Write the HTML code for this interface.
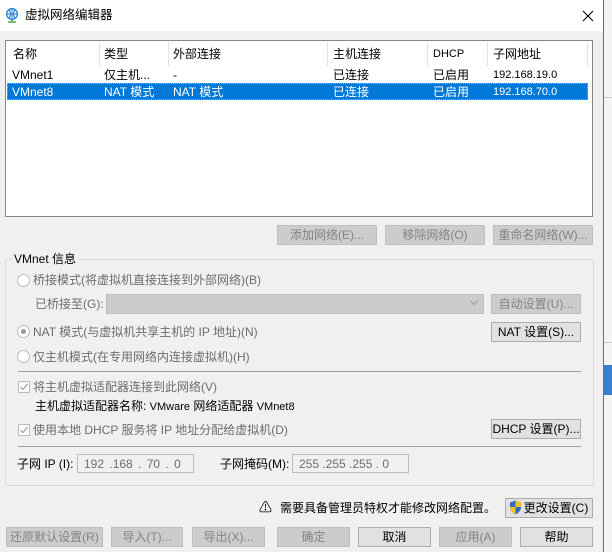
<!DOCTYPE html>
<html><head><meta charset="utf-8"><style>
*{box-sizing:border-box;margin:0;padding:0}
body{width:612px;height:552px;overflow:hidden;background:#f0f0f0;font-family:"Liberation Sans","Noto Sans CJK SC",sans-serif;font-size:12px;color:#000;position:relative}
.a{position:absolute;white-space:nowrap}
.btn{position:absolute;border:1px solid #adadad;background:#e1e1e1;text-align:center;line-height:18px;font-size:12px}
.dis{background:#cccccc;border-color:#bfbfbf;color:#838383}
.g{color:#6d6d6d}
.t{line-height:14px}
</style></head><body>
<div class="a" style="left:0;top:0;width:604px;height:31px;background:#fff"></div>
<div class="a" style="left:603px;top:0;width:1px;height:552px;background:#2b78d0"></div>
<div class="a" style="left:604px;top:0;width:8px;height:552px;background:#f4f4f4"></div>
<div class="a" style="left:604px;top:97px;width:8px;height:1px;background:#ccc"></div>
<div class="a" style="left:604px;top:342px;width:8px;height:1px;background:#ccc"></div>
<div class="a" style="left:604px;top:365px;width:8px;height:30px;background:#3a7fd0"></div>
<svg class="a" style="left:5px;top:8px" width="14" height="16" viewBox="0 0 14 16"><circle cx="7" cy="6" r="5.3" fill="none" stroke="#1e7fd4" stroke-width="1.3"/><path d="M1.7 6h10.6M7 0.7v10.6M4 2c2 2 2 6 0 8M10 2c-2 2-2 6 0 8" stroke="#1e7fd4" fill="none"/><path d="M3 14h8M7 11.5v2.5" stroke="#3a9a3a" stroke-width="1.3"/></svg>
<div class="a t" style="left:25px;top:8px;font-size:12.5px">虚拟网络编辑器</div>
<svg class="a" style="left:582px;top:10px" width="12" height="12"><path d="M1 1L11 11M11 1L1 11" stroke="#000" stroke-width="1.1"/></svg>

<div class="a" style="left:5px;top:40px;width:588px;height:177px;background:#fff;border:1px solid #828790"></div>
<div class="a" style="left:6px;top:41px;width:586px;height:26px;background:#fff"></div>
<div class="a" style="left:99px;top:42px;width:1px;height:24px;background:#e5e5e5"></div>
<div class="a" style="left:168px;top:42px;width:1px;height:24px;background:#e5e5e5"></div>
<div class="a" style="left:327px;top:42px;width:1px;height:24px;background:#e5e5e5"></div>
<div class="a" style="left:427px;top:42px;width:1px;height:24px;background:#e5e5e5"></div>
<div class="a" style="left:487px;top:42px;width:1px;height:24px;background:#e5e5e5"></div>
<div class="a" style="left:587px;top:42px;width:1px;height:24px;background:#e5e5e5"></div>
<div class="a t" style="left:13px;top:47px">名称</div>
<div class="a t" style="left:104px;top:47px">类型</div>
<div class="a t" style="left:173px;top:47px">外部连接</div>
<div class="a t" style="left:333px;top:47px">主机连接</div>
<div class="a t" style="left:433px;top:47px;font-size:11px">DHCP</div>
<div class="a t" style="left:493px;top:47px">子网地址</div>
<div class="a t" style="left:12px;top:68px">VMnet1</div>
<div class="a t" style="left:104px;top:68px">仅主机...</div>
<div class="a t" style="left:173px;top:68px">-</div>
<div class="a t" style="left:333px;top:68px">已连接</div>
<div class="a t" style="left:433px;top:68px">已启用</div>
<div class="a t" style="left:493px;top:68px;font-size:11px">192.168.19.0</div>
<div class="a" style="left:7px;top:83px;width:581px;height:17px;background:#0078d7;border:1px dotted #f0a030"></div>
<div class="a t" style="left:12px;top:85px;color:#fff">VMnet8</div>
<div class="a t" style="left:104px;top:85px;color:#fff">NAT 模式</div>
<div class="a t" style="left:173px;top:85px;color:#fff">NAT 模式</div>
<div class="a t" style="left:333px;top:85px;color:#fff">已连接</div>
<div class="a t" style="left:433px;top:85px;color:#fff">已启用</div>
<div class="a t" style="left:493px;top:85px;color:#fff;font-size:11px">192.168.70.0</div>

<div class="btn dis" style="left:277px;top:225px;width:100px;height:20px">添加网络(E)...</div>
<div class="btn dis" style="left:385px;top:225px;width:100px;height:20px">移除网络(O)</div>
<div class="btn dis" style="left:493px;top:225px;width:100px;height:20px">重命名网络(W)...</div>

<div class="a" style="left:5px;top:259px;width:589px;height:227px;border:1px solid #dcdcdc"></div>
<div class="a t" style="left:12px;top:252px;background:#f0f0f0;padding:0 2px">VMnet 信息</div>
<div class="a" style="left:17px;top:274px;width:13px;height:13px;border-radius:50%;border:1px solid #bcbcbc;background:#fff"></div>
<div class="a t g" style="left:33px;top:273px">桥接模式(将虚拟机直接连接到外部网络)(B)</div>
<div class="a t g" style="left:35px;top:297px">已桥接至(G):</div>
<div class="a" style="left:106px;top:294px;width:378px;height:20px;background:#cccccc;border:1px solid #bfbfbf"></div>
<svg class="a" style="left:470px;top:300px" width="8" height="6"><path d="M0.5 1L4 4.5 7.5 1" fill="none" stroke="#999"/></svg>
<div class="btn dis" style="left:491px;top:294px;width:90px;height:20px">自动设置(U)...</div>
<div class="a" style="left:17px;top:325px;width:13px;height:13px;border-radius:50%;border:1px solid #bcbcbc;background:#fff"></div>
<div class="a" style="left:21px;top:329px;width:5px;height:5px;border-radius:50%;background:#9a9a9a"></div>
<div class="a t g" style="left:33px;top:325px">NAT 模式(与虚拟机共享主机的 IP 地址)(N)</div>
<div class="btn" style="left:491px;top:322px;width:90px;height:20px">NAT 设置(S)...</div>
<div class="a" style="left:17px;top:350px;width:13px;height:13px;border-radius:50%;border:1px solid #bcbcbc;background:#fff"></div>
<div class="a t g" style="left:33px;top:350px">仅主机模式(在专用网络内连接虚拟机)(H)</div>
<div class="a" style="left:18px;top:371px;width:563px;height:1px;background:#a0a0a0"></div>
<div class="a" style="left:18px;top:381px;width:12px;height:12px;border:1px solid #bcbcbc;background:#fff"></div>
<svg class="a" style="left:19px;top:382px" width="10" height="10"><path d="M1.5 5L4 7.5 8.5 2" fill="none" stroke="#9a9a9a" stroke-width="1.2"/></svg>
<div class="a t g" style="left:33px;top:380px">将主机虚拟适配器连接到此网络(V)</div>
<div class="a t" style="left:35px;top:399px">主机虚拟适配器名称: <span style="font-size:11px">VMware</span> 网络适配器 <span style="font-size:11px">VMnet8</span></div>
<div class="a" style="left:18px;top:424px;width:12px;height:12px;border:1px solid #bcbcbc;background:#fff"></div>
<svg class="a" style="left:19px;top:425px" width="10" height="10"><path d="M1.5 5L4 7.5 8.5 2" fill="none" stroke="#9a9a9a" stroke-width="1.2"/></svg>
<div class="a t g" style="left:33px;top:423px">使用本地 DHCP 服务将 IP 地址分配给虚拟机(D)</div>
<div class="btn" style="left:491px;top:419px;width:90px;height:20px">DHCP 设置(P)...</div>
<div class="a" style="left:18px;top:446px;width:563px;height:1px;background:#a0a0a0"></div>
<div class="a t" style="left:17px;top:457px">子网 IP (I):</div>
<div class="a" style="left:77px;top:454px;width:117px;height:19px;border:1px solid #bcbcbc;background:#f0f0f0"></div>
<div class="a t g" style="left:84px;top:457px;word-spacing:2px">192 .168 . 70 .  0</div>
<div class="a t" style="left:220px;top:457px">子网掩码(M):</div>
<div class="a" style="left:292px;top:454px;width:117px;height:19px;border:1px solid #bcbcbc;background:#f0f0f0"></div>
<div class="a t g" style="left:299px;top:457px">255 .255 .255 .  0</div>

<div class="a t" style="left:259px;top:501px;font-size:13px">⚠</div>
<div class="a t" style="left:280px;top:501px">需要具备管理员特权才能修改网络配置。</div>
<div class="btn" style="left:505px;top:498px;width:88px;height:20px;padding-left:14px">更改设置(C)</div>
<svg class="a" style="left:509px;top:500px" width="13" height="15" viewBox="0 0 13 15"><path d="M6.5 0.5L12 2.5V7c0 3.5-2.5 6-5.5 7.5C3.5 13 1 10.5 1 7V2.5z" fill="#2a6cc8"/><path d="M6.5 0.5L12 2.5V7H6.5zM6.5 7H1c0 3.5 2.5 6 5.5 7.5z" fill="#f4c020"/></svg>

<div class="btn dis" style="left:6px;top:527px;width:97px;height:20px">还原默认设置(R)</div>
<div class="btn dis" style="left:111px;top:527px;width:72px;height:20px">导入(T)...</div>
<div class="btn dis" style="left:192px;top:527px;width:73px;height:20px">导出(X)...</div>
<div class="btn dis" style="left:277px;top:527px;width:73px;height:20px">确定</div>
<div class="btn" style="left:358px;top:527px;width:73px;height:20px">取消</div>
<div class="btn dis" style="left:439px;top:527px;width:73px;height:20px">应用(A)</div>
<div class="btn" style="left:520px;top:527px;width:73px;height:20px">帮助</div>
</body></html>
